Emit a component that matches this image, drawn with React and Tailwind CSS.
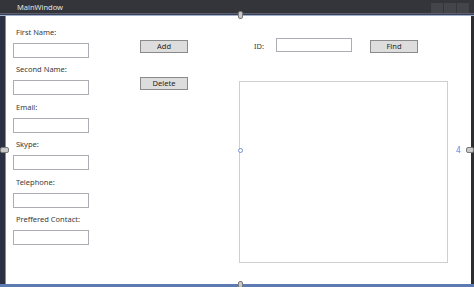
import React from 'react';

const fields = [
  { label: 'First Name:', gap: 'mb-[5px]' },
  { label: 'Second Name:', gap: 'mb-[6px]' },
  { label: 'Email:', gap: 'mb-[5px]' },
  { label: 'Skype:', gap: 'mb-[6px]' },
  { label: 'Telephone:', gap: 'mb-[5px]' },
  { label: 'Preffered Contact:', gap: 'mb-0' },
];

const TextBox = ({ className = '' }) => (
  <div className={`w-[76px] h-[15px] bg-white border border-[#abadb3] ${className}`} />
);

const Button = ({ children, className = '' }) => (
  <div
    className={`w-[48px] h-[13px] bg-[#dddddd] border border-[#8a8a8a] flex items-center justify-center text-[7.5px] leading-none text-[#1e1e1e] ${className}`}
  >
    {children}
  </div>
);

export default function App() {
  return (
    <div
      className="w-[474px] h-[287px] bg-[#2d2d30] flex flex-col overflow-hidden relative"
      style={{ fontFamily: '"Noto Sans", "Open Sans", Arial, sans-serif' }}
    >
      {/* title bar */}
      <div className="h-[13px] bg-[#34353a] flex items-center pl-[17px] pr-[5px]">
        <span className="text-[7.5px] leading-none text-[#e4e4e4] mt-[3px]">MainWindow</span>
        <div className="ml-auto flex gap-[1px] self-start mt-[3px]">
          <div className="w-[12px] h-[10px] bg-[#44454b]" />
          <div className="w-[12px] h-[10px] bg-[#44454b]" />
          <div className="w-[12px] h-[10px] bg-[#44454b]" />
        </div>
      </div>
      <div className="h-[1px] bg-[#5a5e6e]" />
      <div className="h-[1px] bg-[#3b4152]" />
      <div className="h-[1px] bg-[#9fb0cf]" />

      <div className="flex-1 flex min-h-0">
        {/* left chrome */}
        <div className="w-[5px] bg-[#2b3142]" />
        <div className="w-[1px] bg-[#7a8db3]" />

        {/* window body */}
        <div className="flex-1 bg-white flex">
          {/* labels + textboxes */}
          <div className="w-[134px] pl-[7px] pt-[10px] flex flex-col">
            {fields.map((f) => (
              <div key={f.label} className={`flex flex-col ${f.gap}`}>
                <div className="h-[12px] pl-[3px] text-[7.5px] leading-[12px] text-[#3a3a3a] whitespace-nowrap">
                  {f.label}
                </div>
                <TextBox className="mt-[5px]" />
              </div>
            ))}
          </div>

          {/* buttons */}
          <div className="w-[48px] pt-[24px] flex flex-col gap-[24px]">
            <Button>Add</Button>
            <Button>Delete</Button>
          </div>

          {/* search + list */}
          <div className="flex-1 flex flex-col pt-[22px]">
            <div className="flex items-start">
              <div className="ml-[66px] w-[22px] h-[14px] text-[7.5px] leading-[16px] text-[#3a3a3a]">ID:</div>
              <div className="w-[76px] h-[14px] bg-white border border-[#abadb3]" />
              <Button className="ml-[18px] mt-[2px]">Find</Button>
            </div>
            <div className="ml-[51px] mt-[28px] w-[209px] h-[182px] border border-[#cfcfcf]" />
          </div>
        </div>

        {/* right chrome */}
        <div className="w-[3px] bg-[#2d2d30]" />
      </div>

      {/* bottom selection bar */}
      <div className="h-[3px] bg-[#5b7bb2]" />

      {/* designer adorners */}
      <div className="absolute left-[238px] top-[11px] w-[5px] h-[8px] rounded-[2px] bg-[#c9c9c9] border border-[#7a7a7a]" />
      <div className="absolute left-[238px] top-[281px] w-[5px] h-[7px] rounded-[2px] bg-[#c9c9c9] border border-[#7a7a7a]" />
      <div className="absolute left-[238px] top-[148px] w-[5px] h-[5px] rounded-full border border-[#6f8fd6] bg-white" />
      <div className="absolute left-[0px] top-[147px] w-[9px] h-[6px] rounded-[2px] bg-[#c9c9c9] border border-[#7a7a7a]" />
      <div className="absolute left-[466px] top-[147px] w-[8px] h-[6px] rounded-[2px] bg-[#c9c9c9] border border-[#7a7a7a]" />
      <div className="absolute left-[456px] top-[146px] text-[8px] leading-none text-[#4a86e8]">4</div>
    </div>
  );
}
